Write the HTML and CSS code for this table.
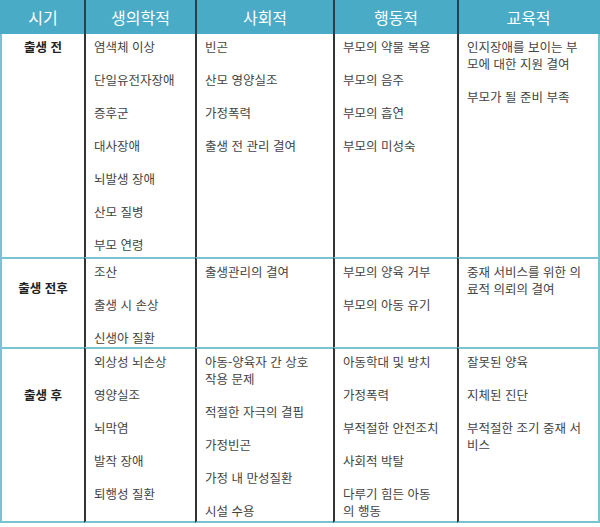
FILE: index.html
```html
<!DOCTYPE html>
<html lang="ko">
<head>
<meta charset="utf-8">
<title>시기별 위험 요인</title>
<link rel="stylesheet" href="styles.css">
</head>
<body>
<div class="grid">
  <div class="cell head first">시기</div>
  <div class="cell head">생의학적</div>
  <div class="cell head">사회적</div>
  <div class="cell head">행동적</div>
  <div class="cell head last">교육적</div>

  <div class="cell period first r1">출생 전</div>
  <div class="cell r1">
    <p>염색체 이상</p><p>단일유전자장애</p><p>증후군</p><p>대사장애</p><p>뇌발생 장애</p><p>산모 질병</p><p>부모 연령</p>
  </div>
  <div class="cell r1">
    <p>빈곤</p><p>산모 영양실조</p><p>가정폭력</p><p>출생 전 관리 결여</p>
  </div>
  <div class="cell r1">
    <p>부모의 약물 복용</p><p>부모의 음주</p><p>부모의 흡연</p><p>부모의 미성숙</p>
  </div>
  <div class="cell last r1">
    <p>인지장애를 보이는 부<br>모에 대한 지원 결여</p><p>부모가 될 준비 부족</p>
  </div>

  <div class="cell period first r2 mid">출생 전후</div>
  <div class="cell r2">
    <p>조산</p><p>출생 시 손상</p><p>신생아 질환</p>
  </div>
  <div class="cell r2">
    <p>출생관리의 결여</p>
  </div>
  <div class="cell r2">
    <p>부모의 양육 거부</p><p>부모의 아동 유기</p>
  </div>
  <div class="cell last r2">
    <p>중재 서비스를 위한 의<br>료적 의뢰의 결여</p>
  </div>

  <div class="cell period first r3 low">출생 후</div>
  <div class="cell r3">
    <p>외상성 뇌손상</p><p>영양실조</p><p>뇌막염</p><p>발작 장애</p><p>퇴행성 질환</p>
  </div>
  <div class="cell r3">
    <p>아동-양육자 간 상호<br>작용 문제</p><p>적절한 자극의 결핍</p><p>가정빈곤</p><p>가정 내 만성질환</p><p>시설 수용</p>
  </div>
  <div class="cell r3">
    <p>아동학대 및 방치</p><p>가정폭력</p><p>부적절한 안전조치</p><p>사회적 박탈</p><p>다루기 힘든 아동<br>의 행동</p>
  </div>
  <div class="cell last r3">
    <p>잘못된 양육</p><p>지체된 진단</p><p>부적절한 조기 중재 서<br>비스</p>
  </div>
</div>
</body>
</html>
```

FILE: styles.css
```css
html, body {
  margin: 0;
  padding: 0;
  background: #ffffff;
}

body {
  font-family: "Noto Sans CJK KR", "Noto Sans", sans-serif;
  width: 600px;
  height: 527px;
  overflow: hidden;
}

.grid {
  display: grid;
  grid-template-columns: 84px 111px 138px 124px 143px;
  grid-template-rows: 34px 223px 90px 176px;
}

.cell {
  box-sizing: border-box;
  border-left: 2px solid #333333;
  padding: 4px 6px 0 8px;
  font-size: 12.5px;
  line-height: 17px;
  color: #444444;
  white-space: nowrap;
  overflow: hidden;
}

.cell p {
  margin: 0 0 16px 0;
}

.head {
  background: #4aabc6;
  color: #ffffff;
  font-size: 16px;
  line-height: 34px;
  padding: 0;
  text-align: center;
  border-left-color: #2c3e4a;
}

.first {
  border-left: 2px solid #79c2d0;
}

.head.first {
  border-left-color: #4aabc6;
}

.last {
  border-right: 2px solid #79c2d0;
}

.head.last {
  border-right-color: #4aabc6;
}

.r2, .r3 {
  border-top: 2px solid #79c2d0;
}

.r3 {
  border-bottom: 2px solid #79c2d0;
}

.period {
  text-align: center;
  font-weight: bold;
  color: #222222;
  padding-left: 0;
  padding-right: 0;
}

.period.mid {
  padding-top: 20px;
}

.period.low {
  padding-top: 37px;
}
```
